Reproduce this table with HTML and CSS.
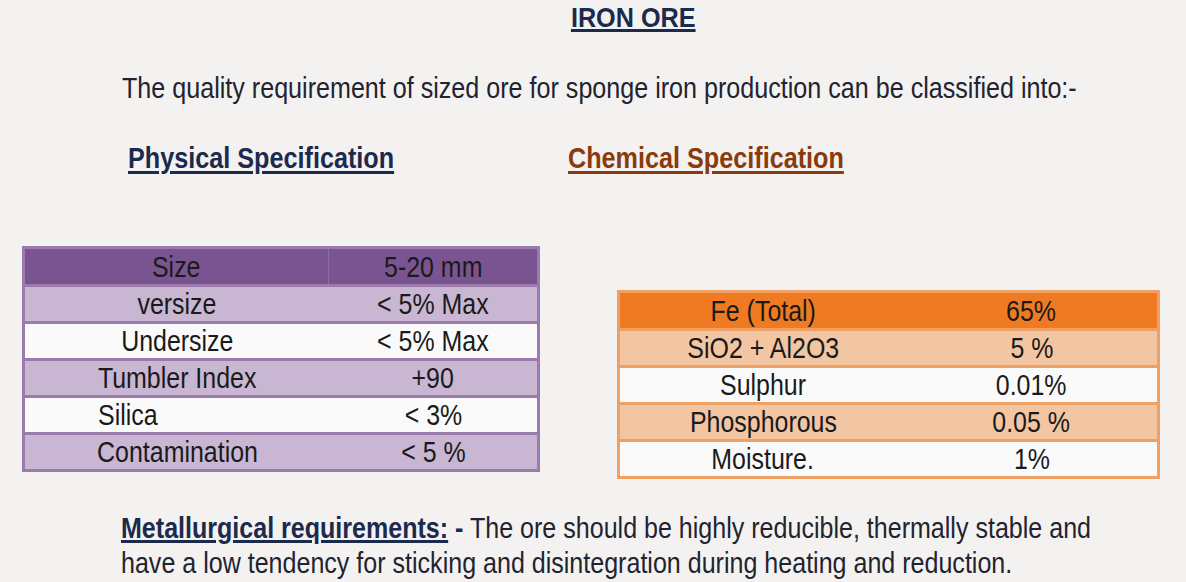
FILE: index.html
```html
<!DOCTYPE html>
<html>
<head>
<meta charset="utf-8">
<link rel="stylesheet" href="styles.css">
</head>
<body>
<div class="page">
  <h1 class="title"><span class="nar">IRON ORE</span></h1>
  <p class="intro"><span class="nar">The quality requirement of sized ore for sponge iron production can be classified into:-</span></p>
  <div class="heads">
    <h2 class="head phys"><span class="nar">Physical Specification</span></h2>
    <h2 class="head chem"><span class="nar">Chemical Specification</span></h2>
  </div>
  <div class="tables">
    <table class="spec purple">
      <tr class="hdr"><td><span class="nar">Size</span></td><td><span class="nar">5-20 mm</span></td></tr>
      <tr class="lt"><td><span class="nar">versize</span></td><td><span class="nar">&lt; 5% Max</span></td></tr>
      <tr class="wt"><td><span class="nar">Undersize</span></td><td><span class="nar">&lt; 5% Max</span></td></tr>
      <tr class="lt"><td><span class="nar">Tumbler Index</span></td><td><span class="nar">+90</span></td></tr>
      <tr class="wt"><td class="left"><span class="nar">Silica</span></td><td><span class="nar">&lt; 3%</span></td></tr>
      <tr class="lt"><td><span class="nar">Contamination</span></td><td><span class="nar">&lt; 5 %</span></td></tr>
    </table>
    <table class="spec orange">
      <tr class="hdr"><td><span class="nar">Fe (Total)</span></td><td><span class="nar">65%</span></td></tr>
      <tr class="lt"><td><span class="nar">SiO2 + Al2O3</span></td><td><span class="nar">5 %</span></td></tr>
      <tr class="wt"><td><span class="nar">Sulphur</span></td><td><span class="nar">0.01%</span></td></tr>
      <tr class="lt"><td><span class="nar">Phosphorous</span></td><td><span class="nar">0.05 %</span></td></tr>
      <tr class="wt"><td><span class="nar">Moisture.</span></td><td><span class="nar">1%</span></td></tr>
    </table>
  </div>
  <div class="meta">
    <span class="nar line"><span class="metalabel">Metallurgical requirements:</span> <b>-</b> The ore should be highly reducible, thermally stable and</span>
    <span class="nar line">have a low tendency for sticking and disintegration during heating and reduction.</span>
  </div>
</div>
</body>
</html>
```

FILE: styles.css
```css
html, body {
  margin: 0;
  padding: 0;
  background: #f3f2f1;
}
body {
  font-family: "Liberation Sans", Arial, sans-serif;
  color: #1e1e28;
}
.page {
  width: 1186px;
  height: 582px;
  overflow: hidden;
}
.nar {
  display: inline-block;
  white-space: nowrap;
  transform: scaleX(0.85);
  transform-origin: left center;
}
.title {
  margin: 0;
  padding-top: 2px;
  text-align: center;
  font-size: 28px;
  line-height: 32px;
  font-weight: bold;
  color: #1c2a4c;
  padding-left: 80px;
}
.title .nar {
  transform: scaleX(0.9);
  transform-origin: center center;
  text-decoration: underline;
  text-decoration-thickness: 3px;
  text-underline-offset: 2px;
}
.intro {
  margin: 37px 0 0 122px;
  font-size: 30px;
  line-height: 34px;
  color: #22232f;
}
.intro .nar {
  transform: scaleX(0.837);
}
.heads {
  display: flex;
  margin-top: 36px;
  padding-left: 128px;
}
.head {
  margin: 0;
  font-size: 30px;
  line-height: 34px;
  font-weight: bold;
}
.head .nar {
  transform: scaleX(0.84);
  text-decoration: underline;
  text-decoration-thickness: 3px;
  text-underline-offset: 3px;
}
.phys {
  color: #1b2a4d;
  width: 440px;
}
.chem {
  color: #8a3a0c;
}
.tables {
  display: flex;
  align-items: flex-start;
  margin-top: 71px;
  padding-left: 22px;
}
.spec {
  border-collapse: separate;
  border-spacing: 0;
  table-layout: fixed;
  font-size: 29px;
  color: #1a1a1a;
}
.spec td {
  text-align: center;
  height: 34px;
  padding: 0;
  line-height: 34px;
  vertical-align: middle;
  overflow: visible;
}
.spec td .nar {
  transform: scaleX(0.86);
  transform-origin: center center;
}
.spec td.left {
  text-align: left;
  padding-left: 73px;
}
.spec td.left .nar {
  transform-origin: left center;
}
.purple {
  width: 518px;
  border: 3px solid #9a7bac;
}
.purple td { border-top: 3px solid #9a7bac; }
.purple tr:first-child td { border-top: none; height: 35px; }
.purple .hdr td:first-child { width: 303px; border-right: 1px solid #8e6fa3; }
.purple .hdr td { background: #7a5490; }
.purple .lt td { background: #c8b6d2; }
.purple .wt td { background: #fbfafb; }
.orange {
  width: 543px;
  margin-left: 77px;
  margin-top: 44px;
  border: 3px solid #f0a062;
}
.orange td { border-top: 3px solid #f0a062; }
.orange tr:first-child td { border-top: none; height: 35px; }
.orange .hdr td:first-child { width: 286px; }
.orange .hdr td { background: #f07a22; }
.orange .lt td { background: #f2c5a3; }
.orange .wt td { background: #fbfafa; }
.meta {
  margin: 31px 0 0 121px;
  font-size: 30px;
  line-height: 35px;
  color: #22232f;
}
.meta .line {
  display: block;
  transform: scaleX(0.835);
}
.metalabel {
  font-weight: bold;
  color: #1b2a4d;
  text-decoration: underline;
  text-decoration-thickness: 3px;
  text-underline-offset: 2px;
}
.meta b {
  color: #1b2a4d;
}
```
